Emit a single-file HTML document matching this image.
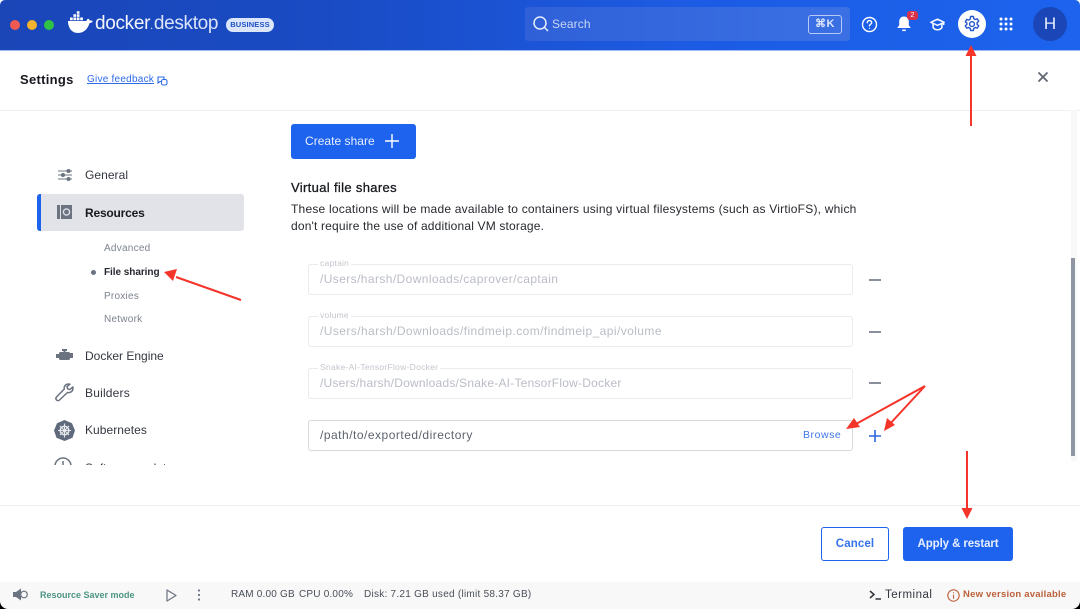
<!DOCTYPE html>
<html lang="en"><head><meta charset="utf-8"><title>Docker Desktop Settings</title>
<style>
html,body{margin:0;padding:0;background:#fff}
#p{position:relative;width:1080px;height:609px;overflow:hidden;background:#fff;font-family:"Liberation Sans",sans-serif;color:#17191e}
.t{position:absolute;white-space:nowrap;line-height:16px}
.b{position:absolute;box-sizing:border-box}
svg{position:absolute;overflow:visible}
.nav{font-size:12px;color:#33373f;letter-spacing:.05px}
.sub{font-size:10px;color:#7d838e;letter-spacing:.25px}
.box{left:308px;width:545px;height:31px;border:1px solid #e9ebee;border-radius:3px}
.lab{left:318px;padding:0 2px;background:#fff;font-size:8.500px;color:#c2c6cd;letter-spacing:.25px;line-height:10px}
.val{left:320px;font-size:12px;color:#b9bdc5}
.min{left:869px;width:12px;height:2px;background:#8a909b}
</style></head><body><div id="p">

<div class="b" style="left:0;top:0;width:1080px;height:51px;background:linear-gradient(90deg,#1a46b8 0%,#1a4bc4 30%,#1c5ce4 65%,#1d63ed 100%);border-bottom:1px solid #9dbcf2;border-radius:5px 5px 0 0"></div>
<div class="b" style="left:10px;top:20px;width:10px;height:10px;border-radius:50%;background:#ee5a52"></div>
<div class="b" style="left:27px;top:20px;width:10px;height:10px;border-radius:50%;background:#f4b32e"></div>
<div class="b" style="left:44px;top:20px;width:10px;height:10px;border-radius:50%;background:#2fc245"></div>

<svg style="left:68px;top:13px" width="25" height="20" viewBox="0 0 25 20"><path fill="#fff" d="M0 8h18.500c.2-1.500 1-2.300 2-2.300.7.500 1.200 1.200 1.300 2 .9-.3 2-.2 3 .3-.7 1.500-1.800 2-3.200 2C20 15.500 16 20 10 20 3.500 20 0 14.500 0 8z"/><path fill="#fff" d="M2 4.500h2.700v2.800H2zM5.400 4.500h2.700v2.800H5.400zM8.800 4.500h2.700v2.800H8.800zM12.200 4.500h2.700v2.800h-2.700zM5.400 1.200h2.700v2.700H5.400zM8.800 1.200h2.700v2.700H8.800zM8.800-1.800h2.700v2.500H8.800z"/></svg>
<div class="t" style="left:95px;top:13px;font-size:19px;line-height:22px;color:#f2f5fc;letter-spacing:-.32px">docker<span style="font-size:11px;margin:0 1px 0 0">.</span><span style="color:#dbe4f8">desktop</span></div>
<div class="b" style="left:226px;top:18px;width:48px;height:14px;border-radius:7px;background:#dbe6fb"></div>
<div class="t" style="left:226px;top:18px;width:48px;text-align:center;font-size:7.500px;line-height:14px;font-weight:700;color:#1d50c4;letter-spacing:.15px">BUSINESS</div>

<div class="b" style="left:525px;top:7px;width:325px;height:34px;border-radius:3px;background:linear-gradient(90deg,#2f60d8,#3b70e4)"></div>
<svg style="left:532px;top:15px" width="18" height="18" viewBox="0 0 18 18" fill="none" stroke="#e6edfb" stroke-width="1.500"><circle cx="8" cy="8" r="6"/><path d="M12.500 12.500l3.500 3.500"/></svg>
<div class="t" style="left:552px;top:16px;font-size:12px;color:#c9d7f5;letter-spacing:.1px">Search</div>
<div class="b" style="left:808px;top:15px;width:34px;height:19px;border:1px solid #b7caf3;border-radius:3px"></div>
<div class="t" style="left:808px;top:16px;width:34px;text-align:center;font-size:11px;font-weight:700;color:#dbe5fa;letter-spacing:.5px">⌘K</div>

<svg style="left:861px;top:16px" width="17" height="17" viewBox="0 0 17 17" fill="none" stroke="#fff" stroke-width="1.400"><circle cx="8.500" cy="8.500" r="7"/><path d="M6.300 6.700c0-1.300 1-2.100 2.200-2.100s2.200.8 2.200 2c0 1.500-2.200 1.600-2.200 3.300" stroke-linecap="round"/><circle cx="8.500" cy="12.300" r=".6" fill="#fff" stroke="none"/></svg>
<svg style="left:896px;top:16px" width="16" height="17" viewBox="0 0 16 17"><path fill="#fff" d="M8 .5c3 0 4.800 2.200 4.800 5.300v3.500l2 2.700H1.200l2-2.700V5.800C3.200 2.700 5 .5 8 .5z"/><rect x="6" y="13.500" width="4" height="1.600" rx=".8" fill="#fff"/></svg>
<div class="b" style="left:907px;top:11px;width:11px;height:9px;border-radius:3px;background:#d8314a"></div>
<div class="t" style="left:907px;top:11px;width:11px;text-align:center;font-size:7px;line-height:9px;color:#fff">2</div>
<svg style="left:930px;top:17px" width="15" height="15" viewBox="0 0 17 15" fill="none" stroke="#fff" stroke-width="1.700" stroke-linejoin="round"><path d="M1 5l7.500-3.500L16 5l-7.500 3.500zM3.500 6.500v4.300c0 1 2.500 2.700 5 2.700s5-1.700 5-2.700V6.500M15.500 5v3"/></svg>

<div class="b" style="left:958px;top:10px;width:28px;height:28px;border-radius:50%;background:#fff"></div>
<svg style="left:963px;top:15px" width="18" height="18" viewBox="0 0 18 18" fill="none" stroke="#2456c8" stroke-width="1.400" stroke-linejoin="round"><path d="M7.600 1.500h2.800l.4 2.100 1.500.9 2-.7 1.400 2.400-1.600 1.400v1.800l1.600 1.400-1.400 2.400-2-.7-1.500.9-.4 2.100H7.600l-.4-2.100-1.500-.9-2 .7-1.400-2.400 1.600-1.400V8.200L2.300 6.800l1.400-2.400 2 .7 1.500-.9z"/><circle cx="9" cy="9.100" r="2.400"/></svg>

<svg style="left:999px;top:17px" width="14" height="14" viewBox="0 0 14 14" fill="#fff"><circle cx="2" cy="2" r="1.500"/><circle cx="7" cy="2" r="1.500"/><circle cx="12" cy="2" r="1.500"/><circle cx="2" cy="7" r="1.500"/><circle cx="7" cy="7" r="1.500"/><circle cx="12" cy="7" r="1.500"/><circle cx="2" cy="12" r="1.500"/><circle cx="7" cy="12" r="1.500"/><circle cx="12" cy="12" r="1.500"/></svg>
<div class="b" style="left:1033px;top:7px;width:34px;height:34px;border-radius:50%;background:#1a46b8"></div>
<div class="t" style="left:1033px;top:7px;width:34px;text-align:center;font-size:17px;line-height:34px;color:#e8eefb">H</div>

<div class="t" style="left:20px;top:72px;font-size:13px;font-weight:700;color:#17191e;letter-spacing:.3px">Settings</div>
<div class="t" style="left:87px;top:72px;font-size:10px;color:#2d6be8;text-decoration:underline;letter-spacing:.24px">Give feedback</div>
<svg style="left:157px;top:76px" width="11" height="10" viewBox="0 0 11 10" fill="none" stroke="#2d6be8" stroke-width="1.100"><path d="M1 1h6v4.500H3L1 7z"/><rect x="4.500" y="3.500" width="5.500" height="5.500" rx="1.800" fill="#fff"/></svg>
<svg style="left:1037px;top:71px" width="12" height="12" viewBox="0 0 12 12" stroke="#5f6672" stroke-width="1.800" fill="none"><path d="M1.500 1.500l9 9M10.500 1.500l-9 9"/></svg>
<div class="b" style="left:0;top:110px;width:1080px;height:1px;background:#f0f1f3"></div>

<svg style="left:58px;top:169px" width="14" height="12" viewBox="0 0 14 12" stroke="#6b7380" stroke-width="1.100" fill="#6b7380"><path d="M0 2h14M0 6h14M0 10h14" fill="none"/><circle cx="10.500" cy="2" r="1.500"/><circle cx="5" cy="6" r="1.500"/><circle cx="10.500" cy="10" r="1.500"/></svg>
<div class="t nav" style="left:85px;top:167px">General</div>
<div class="b" style="left:37px;top:194px;width:207px;height:37px;background:#e1e3e9;border-radius:3px"></div>
<div class="b" style="left:37px;top:194px;width:4px;height:37px;background:#1d63ed;border-radius:3px 0 0 3px"></div>
<svg style="left:57px;top:205px" width="15" height="14" viewBox="0 0 15 14"><rect width="3" height="14" fill="#6b7380"/><rect x="4" width="11" height="14" fill="#6b7380"/><circle cx="9.500" cy="7" r="3.800" fill="#e1e3e9"/><circle cx="9.500" cy="7" r="2.400" fill="#6b7380"/></svg>
<div class="t nav" style="left:85px;top:205px;font-weight:700;color:#17191e;letter-spacing:-.2px">Resources</div>
<div class="t sub" style="left:104px;top:240px;line-height:16px;margin-top:1px">Advanced</div>
<div class="b" style="left:91px;top:270px;width:5px;height:5px;border-radius:50%;background:#6b7380"></div>
<div class="t sub" style="left:104px;top:265px;font-weight:700;color:#25282e;letter-spacing:-.05px">File sharing</div>
<div class="t sub" style="left:104px;top:289px">Proxies</div>
<div class="t sub" style="left:104px;top:312px">Network</div>

<svg style="left:56px;top:349px" width="17" height="13" viewBox="0 0 17 13" fill="#6b7380"><rect x="3" y="3" width="11" height="8" rx="1.500"/><rect x="6" y="0" width="5" height="2" /><rect x="7.500" y="1" width="2" height="3"/><rect x="0" y="5" width="3" height="4"/><rect x="14" y="4" width="3" height="5"/></svg>
<div class="t nav" style="left:85px;top:348px;letter-spacing:0">Docker Engine</div>
<svg style="left:55px;top:383px" width="20" height="19" viewBox="0 0 20 19" fill="none" stroke="#6b7380" stroke-width="1.500" stroke-linejoin="round"><path d="M13.500 1c-2.800 0-4.800 2.300-4.200 5L1.500 14c-.9 1-.7 2.200 0 3 .8.800 2.100.9 3 0l8-7.500c2.700.7 5.500-1.200 5.500-4.300 0-.5-.1-1-.2-1.300L15 6.500l-2.400-.7-.6-2.300L15 1.200c-.5-.1-1-.2-1.500-.2z"/></svg>
<div class="t nav" style="left:85px;top:385px;letter-spacing:.2px">Builders</div>
<svg style="left:54px;top:420px" width="21" height="21" viewBox="0 0 21 21"><path fill="#5f6a7c" d="M10.500 0l7.500 3.200 3 7.300-2.500 7.200-8 3.300-8-3.300L0 10.500l3-7.300z"/><circle cx="10.500" cy="10.500" r="4.300" fill="none" stroke="#e7e9ed" stroke-width="1.500"/><path d="M10.500 3.500v14M4 10.500h13M6 6l9 9M15 6l-9 9" stroke="#e7e9ed" stroke-width="1.100"/></svg>
<div class="t nav" style="left:85px;top:422px">Kubernetes</div>
<div class="b" style="left:40px;top:456px;width:210px;height:9px;overflow:hidden">
<svg style="left:14px;top:1px" width="18" height="18" viewBox="0 0 18 18" fill="none" stroke="#6b7380" stroke-width="1.500"><circle cx="9" cy="9" r="8"/><path d="M9 4v6"/></svg>
<div class="t nav" style="left:45px;top:4px">Software updates</div></div>

<div class="b" style="left:291px;top:124px;width:125px;height:35px;background:#1d63ed;border-radius:3px"></div>
<div class="t" style="left:305px;top:133px;font-size:12px;color:#e8effd;letter-spacing:.03px">Create share</div>
<svg style="left:385px;top:134px" width="14" height="14" viewBox="0 0 14 14" stroke="#fff" stroke-width="1.400"><path d="M7 0v14M0 7h14"/></svg>

<div class="t" style="left:291px;top:179px;font-size:13px;line-height:17px;color:#17191e;letter-spacing:.34px;-webkit-text-stroke:.3px #17191e">Virtual file shares</div>
<div class="t" style="left:291px;top:201px;font-size:12px;color:#26292f;letter-spacing:.22px">These locations will be made available to containers using virtual filesystems (such as VirtioFS), which</div>
<div class="t" style="left:291px;top:218px;font-size:12px;color:#26292f;letter-spacing:.17px">don't require the use of additional VM storage.</div>

<div class="b box" style="top:264px"></div>
<div class="t lab" style="top:258px">captain</div>
<div class="t val" style="top:271px;letter-spacing:.4px">/Users/harsh/Downloads/caprover/captain</div>
<div class="b min" style="top:279px"></div>

<div class="b box" style="top:316px"></div>
<div class="t lab" style="top:310px">volume</div>
<div class="t val" style="top:323px;letter-spacing:.42px">/Users/harsh/Downloads/findmeip.com/findmeip_api/volume</div>
<div class="b min" style="top:331px"></div>

<div class="b box" style="top:368px"></div>
<div class="t lab" style="top:362px;letter-spacing:.28px">Snake-AI-TensorFlow-Docker</div>
<div class="t val" style="top:375px;letter-spacing:.22px">/Users/harsh/Downloads/Snake-AI-TensorFlow-Docker</div>
<div class="b min" style="top:382px"></div>

<div class="b box" style="top:420px;border-color:#d5d8dd"></div>
<div class="t" style="left:320px;top:427px;font-size:12px;color:#5c6370;letter-spacing:.5px">/path/to/exported/directory</div>
<div class="t" style="left:803px;top:427px;font-size:10.500px;color:#3f77e8;letter-spacing:.55px">Browse</div>
<svg style="left:869px;top:430px" width="12" height="12" viewBox="0 0 12 12" stroke="#2a66e0" stroke-width="1.600"><path d="M6 0v12M0 6h12"/></svg>

<div class="b" style="left:1071px;top:110px;width:6px;height:351px;background:#f8f8f9"></div>
<div class="b" style="left:1071px;top:258px;width:4px;height:198px;background:#8f95a3"></div>

<div class="b" style="left:0;top:505px;width:1080px;height:1px;background:#eeeff1"></div>
<div class="b" style="left:821px;top:527px;width:68px;height:34px;border:1.500px solid #1d63ed;border-radius:3px"></div>
<div class="t" style="left:821px;top:536px;width:68px;text-align:center;font-size:11.500px;font-weight:700;color:#3573ea;letter-spacing:.12px">Cancel</div>
<div class="b" style="left:903px;top:527px;width:110px;height:34px;background:#1d63ed;border-radius:3px"></div>
<div class="t" style="left:903px;top:536px;width:110px;text-align:center;font-size:11.500px;font-weight:700;color:#e8effd;letter-spacing:-.1px">Apply &amp; restart</div>

<div class="b" style="left:0;top:597px;width:1080px;height:12px;background:#000"></div>
<div class="b" style="left:0;top:582px;width:1080px;height:27px;background:#f8f8f9;border-radius:0 0 8px 8px"></div>
<svg style="left:13px;top:588px" width="15" height="13" viewBox="0 0 15 13"><path fill="#6b7380" d="M0 4h3l5-3.500v12L3 9H0z"/><circle cx="11" cy="6.500" r="3.300" fill="none" stroke="#6b7380" stroke-width="1.200"/></svg>
<div class="t" style="left:40px;top:587px;font-size:9px;font-weight:700;color:#4d9583;letter-spacing:0">Resource Saver mode</div>
<svg style="left:166px;top:589px" width="11" height="13" viewBox="0 0 11 13" fill="none" stroke="#6b7380" stroke-width="1.200" stroke-linejoin="round"><path d="M1 1l9 5.500-9 5.500z"/></svg>
<svg style="left:197px;top:589px" width="4" height="12" viewBox="0 0 4 12" fill="#6b7380"><circle cx="2" cy="1.500" r="1.100"/><circle cx="2" cy="6" r="1.100"/><circle cx="2" cy="10.500" r="1.100"/></svg>
<div class="t" style="left:231px;top:587px;font-size:10px;color:#4a4f58;letter-spacing:.2px">RAM 0.00 GB</div>
<div class="t" style="left:299px;top:587px;font-size:10px;color:#4a4f58;letter-spacing:.2px">CPU 0.00%</div>
<div class="t" style="left:364px;top:587px;font-size:10px;color:#4a4f58;letter-spacing:.26px">Disk: 7.21 GB used (limit 58.37 GB)</div>
<svg style="left:869px;top:590px" width="12" height="10" viewBox="0 0 12 10" fill="none" stroke="#30343b" stroke-width="1.500"><path d="M1 1l4 3.500L1 8M6.500 9H12"/></svg>
<div class="t" style="left:885px;top:587px;font-size:11.500px;color:#33373f;letter-spacing:.5px">Terminal</div>
<svg style="left:947px;top:589px" width="13" height="13" viewBox="0 0 13 13" fill="none" stroke="#c0603a" stroke-width="1.100"><circle cx="6.500" cy="6.500" r="5.700"/><path d="M6.500 5.700v4M6.500 3.200v1.200"/></svg>
<div class="t" style="left:963px;top:587px;font-size:9.500px;font-weight:700;color:#bb6038;letter-spacing:.22px">New version available</div>

<svg style="left:0;top:0" width="1080" height="609" viewBox="0 0 1080 609" fill="none">
<g stroke="#f5342a" stroke-width="2">
<path d="M971 126V56"/><path d="M241 300L176 277"/><path d="M925 386L856 424"/><path d="M925 386L888 426"/><path d="M967 451V508"/>
</g>
<g fill="#f5342a">
<path d="M971 45l-5.500 11h11z"/><path d="M164 272l13-3-4 12z"/><path d="M846 429l8-11 6 9z"/><path d="M884 431l3-13 8 7z"/><path d="M967 519l-5.500-11h11z"/>
</g></svg>
</div></body></html>
